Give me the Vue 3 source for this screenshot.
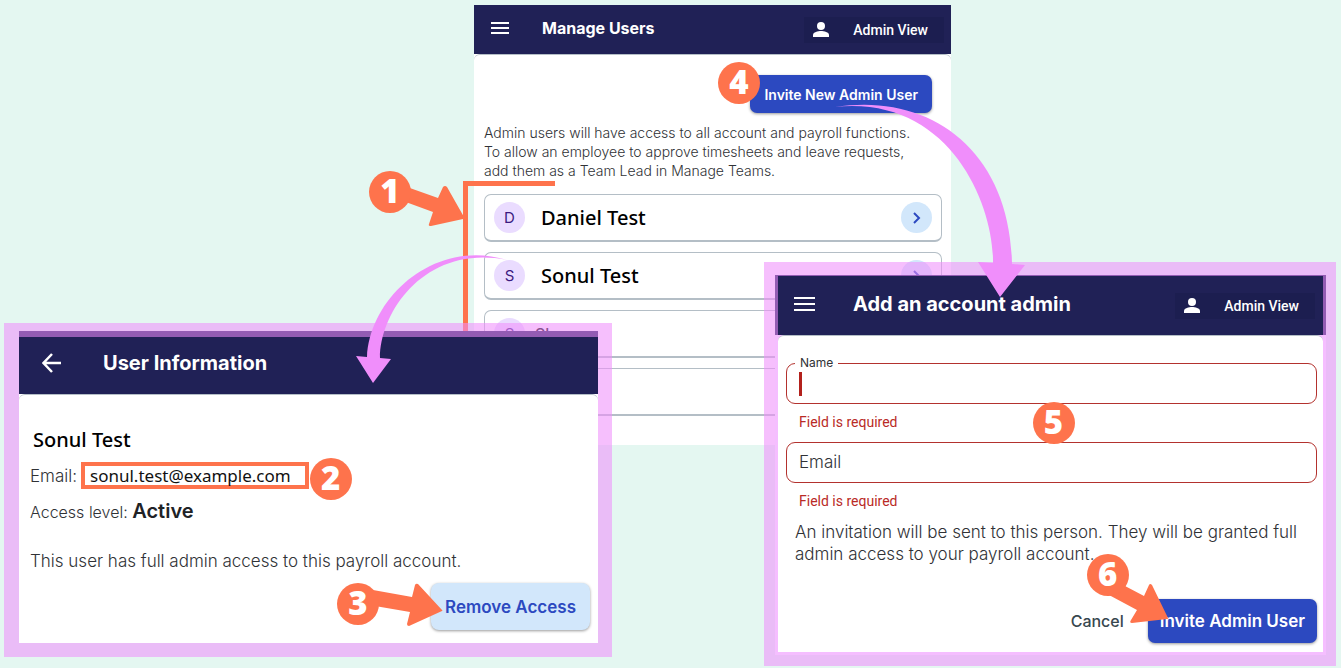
<script setup>
import { ref } from 'vue'

const users = ref([
  { initial: 'D', name: 'Daniel Test' },
  { initial: 'S', name: 'Sonul Test' },
  { initial: 'S', name: 'Shaun', small: true },
  { initial: '', name: '' }
])
const name = ref('')
const email = ref('')
</script>

<template>
  <main class="scene">
    <section class="window users">
      <header class="bar">
        <button class="icon-btn" aria-label="Menu">
          <svg class="menu" viewBox="0 0 18 12"><path d="M0 1h18M0 6h18M0 11h18" /></svg>
        </button>
        <h1>Manage Users</h1>
        <button class="chip">
          <svg class="person" viewBox="0 0 16 16"><circle cx="8" cy="4" r="4" /><path d="M0 15v-2c0-3 5-4 8-4s8 1 8 4v2z" /></svg>
          Admin View
        </button>
      </header>
      <div class="sheet users-body">
        <div class="invite-row">
          <button class="primary">Invite New Admin User</button>
          <span class="badge four">4</span>
        </div>
        <p class="intro">
          Admin users will have access to all account and payroll functions.<br />
          To allow an employee to approve timesheets and leave requests,<br />
          add them as a Team Lead in Manage Teams.
        </p>
        <ul class="list">
          <li v-for="(user, i) in users" :key="i" class="row">
            <template v-if="user.name">
              <span class="avatar">{{ user.initial }}</span>
              <span class="person-name" :class="{ small: user.small }">{{ user.name }}</span>
              <button class="go" :aria-label="'Open ' + user.name">
                <svg viewBox="0 0 8 12"><path d="M1 1l5 5-5 5" /></svg>
              </button>
            </template>
          </li>
        </ul>
      </div>
      <span class="bracket"></span>
    </section>

    <section class="window info">
      <header class="bar tall">
        <button class="icon-btn" aria-label="Back">
          <svg class="back" viewBox="0 0 20 20"><path d="M19 10H2M10 1L1.500 10l8.500 9" /></svg>
        </button>
        <h2>User Information</h2>
      </header>
      <div class="sheet info-body">
        <h3>Sonul Test</h3>
        <p class="email-line">Email: <span class="email-box">sonul.test@example.com<span class="badge two">2</span></span></p>
        <p class="access">Access level: <strong>Active</strong></p>
        <p class="note">This user has full admin access to this payroll account.</p>
        <div class="actions">
          <button class="remove">Remove Access</button>
          <span class="callout three">
            <svg class="pointer" viewBox="0 0 106 44"><path d="M36 7L75 14L78 2Q79 0 81 1L105 27Q106 28 105 28L72 43Q70 43 70 41L73 29L38 23Z" /></svg>
            <span class="badge">3</span>
          </span>
        </div>
      </div>
    </section>

    <section class="window add">
      <div class="inner">
        <header class="bar tall">
          <button class="icon-btn" aria-label="Menu">
            <svg class="menu" viewBox="0 0 21 14"><path d="M0 1h21M0 7h21M0 13h21" /></svg>
          </button>
          <h2>Add an account admin</h2>
          <button class="chip">
            <svg class="person" viewBox="0 0 16 16"><circle cx="8" cy="4" r="4" /><path d="M0 15v-2c0-3 5-4 8-4s8 1 8 4v2z" /></svg>
            Admin View
          </button>
        </header>
        <form class="sheet form" @submit.prevent>
          <div class="field">
            <label class="floating" for="admin-name">Name</label>
            <input id="admin-name" v-model="name" type="text" />
            <span class="caret"></span>
          </div>
          <p class="error">Field is required</p>
          <div class="field">
            <label class="inside" for="admin-email">Email</label>
            <input id="admin-email" v-model="email" type="email" />
            <span class="badge five">5</span>
          </div>
          <p class="error">Field is required</p>
          <p class="explain">An invitation will be sent to this person. They will be granted full<br />admin access to your payroll account.</p>
          <div class="buttons">
            <button type="button" class="cancel">Cancel</button>
            <div class="submit-wrap">
              <button type="submit" class="primary large">Invite Admin User</button>
              <span class="callout six">
                <svg class="pointer" viewBox="0 0 82 70"><path d="M38 32L57 42L62 31Q63 29 65 31L81 64Q82 65 80 65L45 69Q42 69 44 66L50 56L22 41Z" /></svg>
                <span class="badge">6</span>
              </span>
            </div>
          </div>
        </form>
      </div>
    </section>

    <span class="callout one">
      <svg class="pointer" viewBox="0 0 96 56"><path d="M38 16L69 27L74 16Q76 14 78 16L95 46Q96 48 94 48L62 55Q59 55 60 53L64 41L34 30Z" /></svg>
      <span class="badge">1</span>
    </span>
    <svg class="swoop to-info" viewBox="0 0 152 130"><path d="M151 6C80 -16 14 42 11 103L0 102L17 129L35 105L24 104C24 57 70 -10 151 6Z" /></svg>
    <svg class="swoop to-add" viewBox="0 0 192 196"><path d="M0 7C95 -8 175 50 177 164L190 165L165 197L143 162L158 163C159 105 115 -5 0 7Z" /></svg>
  </main>
</template>

<style>
body {
  background: #e4f7f1;
}
</style>

<style scoped>
* {
  box-sizing: border-box;
}
.scene {
  position: relative;
  min-height: 100vh;
  overflow: hidden;
  background: #e4f7f1;
  color: #303236;
  font-family: Inter, "Liberation Sans", sans-serif;
}
h1, h2, h3, p, ul {
  margin: 0;
  padding: 0;
}
button {
  font-family: inherit;
  border: 0;
  padding: 0;
  cursor: pointer;
}
.window {
  position: absolute;
}
.users {
  top: 5px;
  left: 474px;
  right: 390px;
}
.info {
  top: 323px;
  left: 4px;
  right: 729px;
  border: solid rgba(240, 142, 251, 0.57);
  border-width: 8px 14px 14px 15px;
}
.add {
  top: 262px;
  left: 764px;
  right: 5px;
  border: solid rgba(240, 142, 251, 0.57);
  border-width: 13px 10px 11px 11px;
}
.inner {
  background: #f5beff;
  padding-bottom: 3px;
}
.bar {
  display: flex;
  align-items: center;
  height: 49px;
  padding: 0 7px 3px 17px;
  background: #202156;
  color: #fff;
}
.bar h1 {
  margin-left: 33px;
  font-size: 16px;
  line-height: 20px;
  font-weight: 700;
}
.bar.tall {
  height: 63px;
  padding: 0 20px 6px 23px;
  border-top: 6px solid #935cb3;
}
.bar h2 {
  margin-left: 41px;
  font-size: 20px;
  line-height: 24px;
  font-weight: 700;
}
.add .bar.tall {
  height: 60px;
  padding: 0 8px 3px 16px;
  border: 3px solid #935cb3;
  border-width: 1px 3px 0;
}
.add .bar h2 {
  margin-left: 38px;
}
.icon-btn {
  display: flex;
  background: none;
}
.icon-btn svg {
  fill: none;
  stroke: #fff;
  stroke-width: 2;
}
.menu {
  width: 18px;
  height: 12px;
}
.add .menu {
  width: 21px;
  height: 14px;
}
.back {
  width: 20px;
  height: 20px;
}
.icon-btn .back {
  stroke-width: 2.5;
}
.chip {
  display: flex;
  align-items: center;
  gap: 24px;
  height: 26px;
  margin: 4px 0 0 auto;
  padding: 0 16px 0 9px;
  background: #1c1e50;
  color: #fff;
  font: 500 14px/20px Roboto, "Noto Sans", sans-serif;
}
.person {
  width: 16px;
  height: 16px;
  fill: #fff;
}
.sheet {
  background: #fff;
  border-top: 1px solid #b4bec6;
  border-radius: 6px 6px 0 0;
}
.users-body {
  padding: 20px 9px 29px 10px;
}
.users {
  background: #fff;
}
.info {
  background: #fff;
  background-clip: padding-box;
}
.invite-row {
  position: relative;
  display: flex;
  justify-content: flex-end;
  padding-right: 10px;
}
.primary {
  height: 38px;
  padding: 0 14px;
  border-radius: 7px;
  background: #2c49c0;
  color: #fff;
  font-size: 14px;
  font-weight: 600;
  box-shadow: 0 1px 3px rgba(0, 0, 0, 0.4);
}
.primary.large {
  height: 44px;
  padding: 0 12px;
  font-size: 17px;
}
.badge {
  display: flex;
  justify-content: center;
  width: 42px;
  height: 42px;
  border-radius: 50%;
  background: #fe734c;
  color: #fff;
  font: 800 33px/40px "Open Sans", "Noto Sans", sans-serif;
}
.four {
  position: absolute;
  top: -13px;
  right: 182px;
}
.intro {
  margin-top: 10px;
  font-size: 14px;
  line-height: 19px;
  font-weight: 300;
  white-space: nowrap;
}
.list {
  display: flex;
  flex-direction: column;
  gap: 10px;
  margin-top: 14px;
  list-style: none;
}
.row {
  display: flex;
  align-items: center;
  height: 48px;
  padding: 0 9px;
  border: 1px solid #b4bec6;
  border-bottom-width: 2px;
  border-radius: 7px;
}
.avatar {
  width: 31px;
  height: 31px;
  border-radius: 50%;
  background: #eadcff;
  color: #3b1a80;
  text-align: center;
  font-size: 15px;
  line-height: 31px;
}
.person-name {
  margin-left: 16px;
  color: #000;
  font: 500 20px/28px "Noto Sans", sans-serif;
}
.person-name.small {
  margin-left: 10px;
  font: 500 16px/20px Inter, sans-serif;
}
.go {
  display: flex;
  align-items: center;
  justify-content: center;
  width: 31px;
  height: 31px;
  margin-left: auto;
  border-radius: 50%;
  background: #d2e7fb;
}
.go svg {
  width: 8px;
  height: 12px;
  fill: none;
  stroke: #2c49c0;
  stroke-width: 2;
}
.bracket {
  position: absolute;
  top: 176px;
  left: -11px;
  width: 92px;
  height: 151px;
  border: solid #fe734c;
  border-width: 5px 0 0 5px;
}
.info-body {
  padding: 31px 8px 13px 11px;
  font-weight: 300;
}
.info-body h3 {
  padding-left: 3px;
  color: #000;
  font: 500 20px/28px "Noto Sans", sans-serif;
}
.email-line {
  display: flex;
  align-items: center;
  gap: 4px;
  margin-top: 8px;
  font-size: 17px;
  line-height: 24px;
}
.email-box {
  position: relative;
  padding: 0 14px 0 5px;
  border: 4px solid #fe734c;
  color: #111;
  font: 400 17px/19px "Noto Sans", sans-serif;
}
.two {
  position: absolute;
  top: -8px;
  right: -47px;
}
.access {
  margin-top: 10px;
  font-size: 16px;
  line-height: 24px;
}
.access strong {
  color: #202226;
  font-size: 20px;
  font-weight: 600;
}
.note {
  margin-top: 25px;
  font-size: 17px;
  line-height: 24px;
  white-space: nowrap;
}
.actions {
  position: relative;
  display: flex;
  justify-content: flex-end;
  margin-top: 10px;
}
.remove {
  height: 47px;
  padding: 0 14px;
  border-radius: 8px;
  background: #d2e7fb;
  color: #2c49c0;
  font-size: 17px;
  font-weight: 600;
  box-shadow: 0 1px 3px rgba(0, 0, 0, 0.4);
}
.callout {
  position: absolute;
}
.callout .badge {
  position: relative;
}
.pointer {
  position: absolute;
  top: 0;
  left: 0;
  fill: #fe734c;
}
.three {
  top: 0;
  right: 211px;
}
.three .pointer {
  width: 106px;
  height: 44px;
}
.six {
  top: -45px;
  left: -61px;
}
.six .pointer {
  width: 82px;
  height: 70px;
}
.one {
  top: 171px;
  left: 369px;
}
.one .pointer {
  width: 96px;
  height: 56px;
}
.form {
  margin: 0 3px;
  padding: 27px 6px 9px 8px;
}
.field {
  position: relative;
}
.field input {
  display: block;
  width: 100%;
  height: 41px;
  padding: 0 13px;
  border: 1px solid #b3322e;
  border-radius: 9px;
  outline: 0;
  background: transparent;
  font: 400 16px Inter, sans-serif;
}
.floating {
  position: absolute;
  top: -8px;
  left: 9px;
  padding: 0 5px;
  background: #fff;
  font-size: 12px;
  line-height: 16px;
  font-weight: 400;
}
.inside {
  position: absolute;
  top: 10px;
  left: 13px;
  font-size: 17px;
  line-height: 20px;
  font-weight: 300;
}
.caret {
  position: absolute;
  top: 9px;
  left: 13px;
  width: 3px;
  height: 24px;
  background: #b3211c;
}
.error {
  padding: 8px 13px 10px;
  color: #b92a26;
  font: 400 14px/20px Roboto, sans-serif;
}
.five {
  position: absolute;
  top: -40px;
  left: calc(50% - 19px);
}
.explain {
  padding-left: 9px;
  font-size: 17px;
  line-height: 22px;
  font-weight: 300;
  white-space: nowrap;
}
.buttons {
  display: flex;
  align-items: center;
  justify-content: flex-end;
  gap: 24px;
  margin-top: 34px;
}
.submit-wrap {
  position: relative;
}
.cancel {
  background: none;
  color: #37474f;
  font-size: 16px;
  font-weight: 500;
}
.five, .two, .four {
  z-index: 1;
}
.swoop {
  position: absolute;
  overflow: visible;
  fill: #f08efb;
  pointer-events: none;
}
.to-info {
  top: 254px;
  left: 356px;
  width: 152px;
  height: 130px;
}
.to-add {
  top: 100px;
  left: 835px;
  width: 192px;
  height: 196px;
}
</style>
